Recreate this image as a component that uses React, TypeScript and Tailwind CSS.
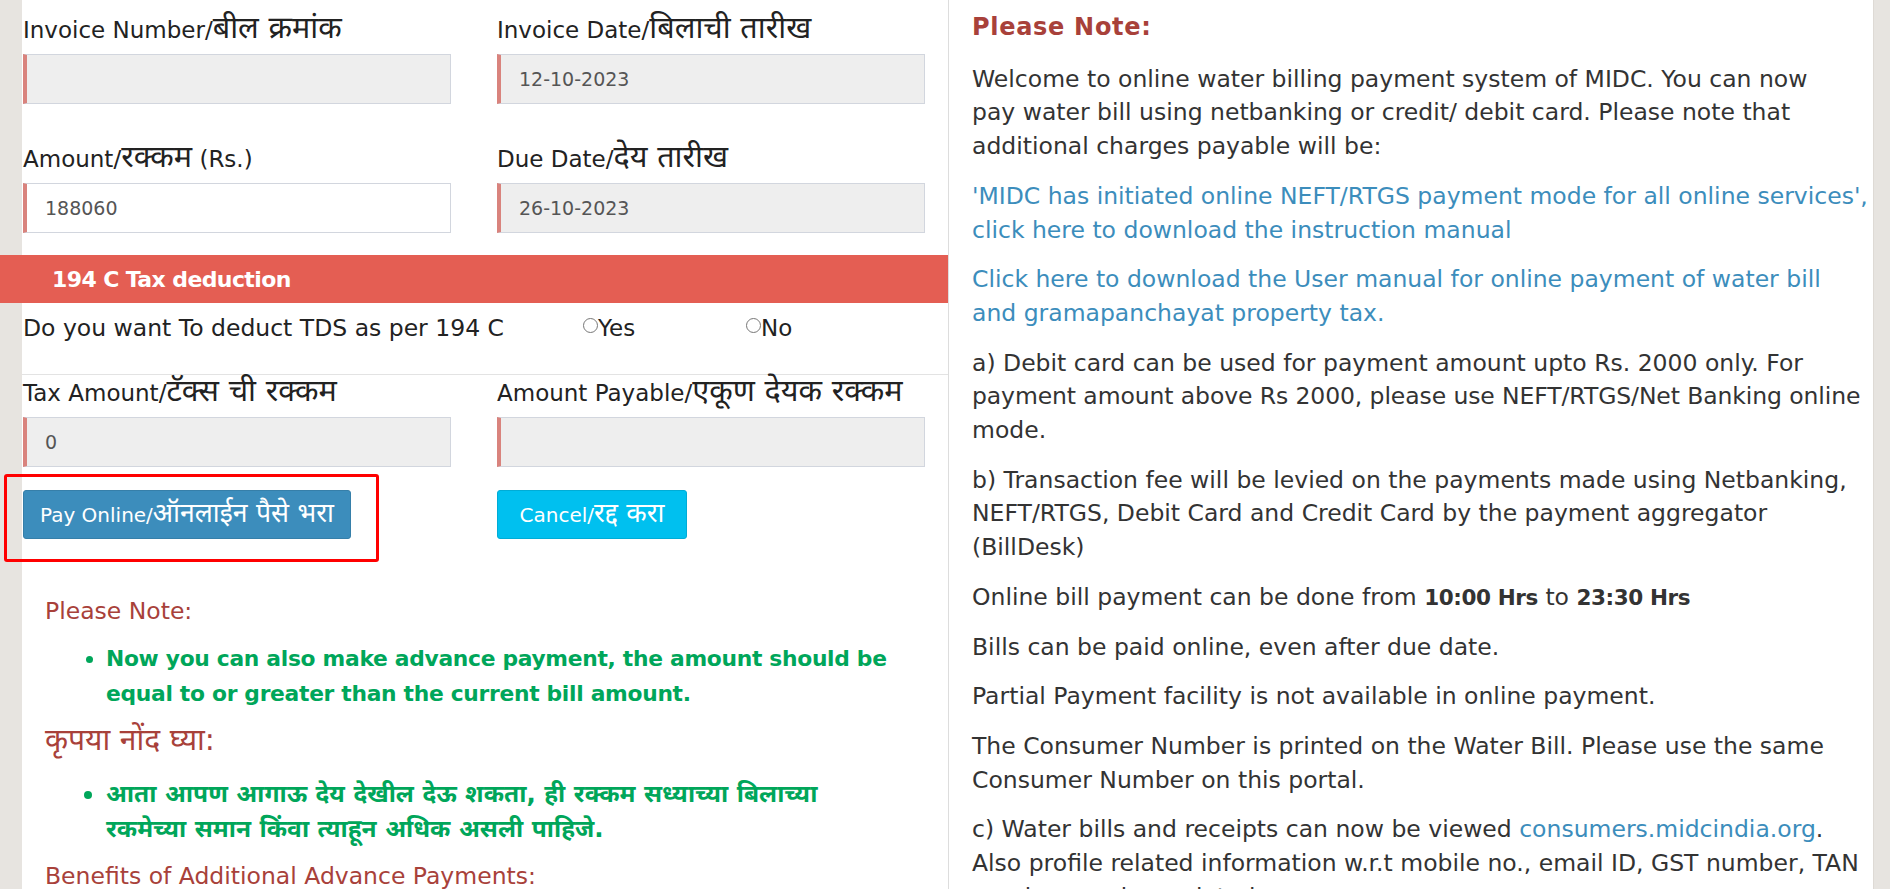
import React from 'react';

const FONT = "font-['DejaVu_Sans','Noto_Sans',sans-serif]";

// Devanagari fallback renders small next to DejaVu, so bump it up a bit
const Dv = ({ children }: { children: React.ReactNode }) => <span className="text-[1.33em] leading-none">{children}</span>;

const Field = ({ en, mr, tail, value, readOnly = true }: { en: string; mr: string; tail?: string; value?: string; readOnly?: boolean }) => (
  <div className="mb-[38px]">
    <div className="h-[30px] text-[23px] leading-[30px] text-[#222] mb-[11px] whitespace-nowrap">
      {en}
      <Dv>{mr}</Dv>
      {tail}
    </div>
    <div
      className={`h-[50px] border border-[#d2d6de] border-l-4 border-l-[#d9837d] flex items-center pl-[18px] text-[19px] text-[#555] ${
        readOnly ? 'bg-[#eeeeee]' : 'bg-white'
      }`}
    >
      {value}
    </div>
  </div>
);

const Radio = ({ label }: { label: string }) => (
  <label className="flex items-center text-[23px] leading-[30px] text-[#222]">
    <span className="w-[15px] h-[15px] rounded-full border border-[#777] bg-white mb-[6px]" />
    {label}
  </label>
);

const Para = ({ children, className = '' }: { children: React.ReactNode; className?: string }) => (
  <p className={`mb-[16px] ${className}`}>{children}</p>
);

export default function App() {
  return (
    <div className={`${FONT} w-[1890px] h-[889px] overflow-hidden flex bg-[#e7e4e0]`}>
      {/* left: bill form */}
      <div className="w-[949px] shrink-0 bg-white border-r border-[#dddddd] flex flex-col overflow-hidden">
        <div className="shrink-0 border-l-[22px] border-[#e7e4e0] pt-[13px]">
          <div className="ml-px w-[902px] grid grid-cols-2 gap-x-[46px]">
            <Field en="Invoice Number/" mr="बील क्रमांक" value="" />
            <Field en="Invoice Date/" mr="बिलाची तारीख" value="12-10-2023" />
            <div className="-mb-[16px]">
              <Field en="Amount/" mr="रक्कम" tail=" (Rs.)" value="188060" readOnly={false} />
            </div>
            <div className="-mb-[16px]">
              <Field en="Due Date/" mr="देय तारीख" value="26-10-2023" />
            </div>
          </div>
        </div>

        <div className="shrink-0 h-[48px] bg-[#e45e53] flex items-center pl-[52px] text-white font-bold text-[22px] tracking-[-0.6px]">
          194 C Tax deduction
        </div>

        <div className="shrink-0 border-l-[22px] border-[#e7e4e0] flex-1 flex flex-col">
          <div className="shrink-0 h-[72px] flex items-start pt-[10px] border-b border-[#e3e3e3]">
            <div className="ml-px w-[560px] text-[23.5px] leading-[30px] text-[#222] whitespace-nowrap">Do you want To deduct TDS as per 194 C</div>
            <div className="w-[163px]"><Radio label="Yes" /></div>
            <Radio label="No" />
          </div>

          <div className="shrink-0 ml-px w-[902px] grid grid-cols-2 gap-x-[46px] pt-[1px]">
            <div className="[&>div]:mb-0"><Field en="Tax Amount/" mr="टॅक्स ची रक्कम" value="0" /></div>
            <div className="[&>div]:mb-0"><Field en="Amount Payable/" mr="एकूण देयक रक्कम" value="" /></div>
          </div>

          <div className="shrink-0 relative ml-px w-[902px] grid grid-cols-2 gap-x-[46px] mt-[23px]">
            <div>
              <button className="h-[49px] w-[328px] rounded-[3px] bg-[#3c8dbc] border border-[#367fa9] text-white text-[20px] leading-[30px] whitespace-nowrap">
                Pay Online/<Dv>ऑनलाईन पैसे भरा</Dv>
              </button>
            </div>
            <div>
              <button className="h-[49px] w-[190px] rounded-[3px] bg-[#00c0ef] border border-[#00acd6] text-white text-[20px] leading-[30px] whitespace-nowrap">
                Cancel/<Dv>रद्द करा</Dv>
              </button>
            </div>
            {/* highlight annotation */}
            <div className="absolute -left-[19px] -top-[16px] w-[375px] h-[88px] border-[3px] border-[#ff0000] rounded-[3px]" />
          </div>

          <div className="shrink-0 pl-[23px] pt-[57px] pr-[20px]">
            <div className="text-[23.5px] text-[#a8413a] leading-[30px] mb-[15px]">Please Note:</div>
            <ul className="list-disc pl-[61px] text-[21.8px] font-bold tracking-[-0.3px] text-[#00a65a] leading-[35px] mb-[12px]">
              <li>Now you can also make advance payment, the amount should be equal to or greater than the current bill amount.</li>
            </ul>
            <div className="text-[30px] text-[#a8413a] leading-[34px] mb-[19px]">कृपया नोंद घ्या:</div>
            <ul className="list-disc pl-[61px] mr-[60px] text-[24.5px] font-bold text-[#00a65a] leading-[35px] mb-[15px]">
              <li>आता आपण आगाऊ देय देखील देऊ शकता, ही रक्कम सध्याच्या बिलाच्या रकमेच्या समान किंवा त्याहून अधिक असली पाहिजे.</li>
            </ul>
            <div className="text-[23.5px] text-[#a8413a] leading-[30px]">Benefits of Additional Advance Payments:</div>
          </div>
        </div>
      </div>

      {/* right: notes */}
      <div className="w-[924px] shrink-0 bg-white pl-[23px] pt-[11px] text-[23.5px] leading-[33.7px] text-[#333] whitespace-nowrap">
        <div className="text-[24px] font-bold tracking-[0.7px] text-[#a8413a] mb-[18px]">Please Note:</div>
        <Para>
          Welcome to online water billing payment system of MIDC. You can now
          <br />
          pay water bill using netbanking or credit/ debit card. Please note that
          <br />
          additional charges payable will be:
        </Para>
        <Para className="text-[#3c8dbc]">
          'MIDC has initiated online NEFT/RTGS payment mode for all online services',
          <br />
          click here to download the instruction manual
        </Para>
        <Para className="text-[#3c8dbc]">
          Click here to download the User manual for online payment of water bill
          <br />
          and gramapanchayat property tax.
        </Para>
        <Para>
          a) Debit card can be used for payment amount upto Rs. 2000 only. For
          <br />
          <span className="tracking-[-0.1px]">payment amount above Rs 2000, please use NEFT/RTGS/Net Banking online</span>
          <br />
          mode.
        </Para>
        <Para>
          b) Transaction fee will be levied on the payments made using Netbanking,
          <br />
          NEFT/RTGS, Debit Card and Credit Card by the payment aggregator
          <br />
          (BillDesk)
        </Para>
        <Para>
          Online bill payment can be done from <b className="font-bold text-[21.5px] tracking-[-0.4px]">10:00 Hrs</b> to{' '}
          <b className="font-bold text-[21.5px] tracking-[-0.4px]">23:30 Hrs</b>
        </Para>
        <Para>Bills can be paid online, even after due date.</Para>
        <Para>Partial Payment facility is not available in online payment.</Para>
        <Para>
          The Consumer Number is printed on the Water Bill. Please use the same
          <br />
          Consumer Number on this portal.
        </Para>
        <Para>
          c) Water bills and receipts can now be viewed <span className="text-[#3c8dbc]">consumers.midcindia.org</span>.
          <br />
          Also profile related information w.r.t mobile no., email ID, GST number, TAN
          <br />
          number can be updated.
        </Para>
      </div>
      <div className="flex-1 border-l border-[#dedad5]" />
    </div>
  );
}
